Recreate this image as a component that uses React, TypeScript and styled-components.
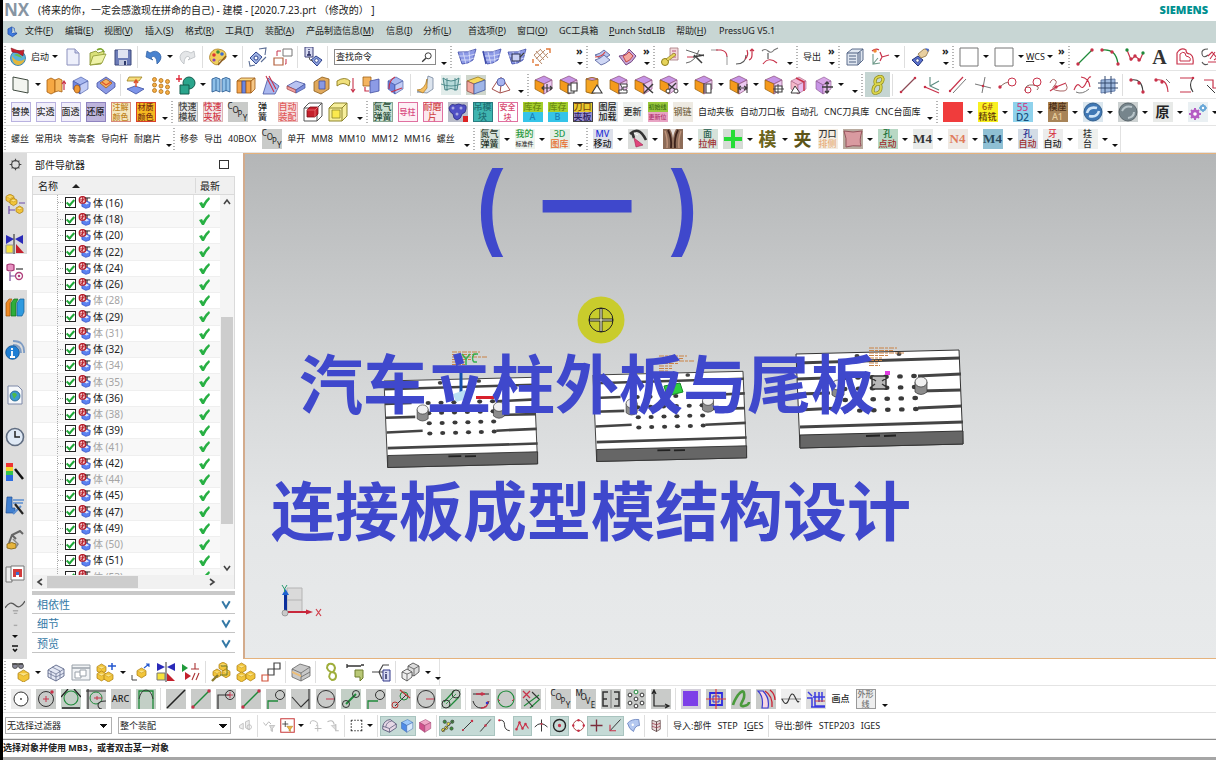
import React from 'react';
import styled, { createGlobalStyle, css } from 'styled-components';

const Global = createGlobalStyle`
  *, *::before, *::after { box-sizing: border-box; }
  body { margin: 0; background: #fff; }
  body, button, input, select {
    font-family: "Noto Sans", "Noto Sans CJK SC", sans-serif;
    font-size: 9px;
    color: #222;
  }
  button { border: 0; padding: 0; margin: 0; background: none; }
`;

/* ---------- icon drawings: [path, fill, stroke, stroke width] ---------- */

type Shape = [string, string?, string?, number?];
const N = 'none';
const K = '#3c3c3c';
const R = '#c8324a';
const G = '#1f8a3a';
const c = (x: number, y: number, r: number) =>
  `M${x - r} ${y}a${r} ${r} 0 1 0 ${2 * r} 0a${r} ${r} 0 1 0 ${-2 * r} 0z`;
const box = (x: number, y: number, w: number, h: number) => `M${x} ${y}h${w}v${h}h${-w}z`;
const ln = (d: string, s = K, w = 1.2): Shape => [d, N, s, w];
const dot = (x: number, y: number, f = R, r = 1.7): Shape => [c(x, y, r), f, N];

const cube = (top: string, left: string, right: string, edge = '#555'): Shape[] => [
  ['M2 6l8-4 7 4-8 4z', top, edge, 0.6],
  ['M2 6l7 4v9l-7-5z', left, edge, 0.6],
  ['M9 10l8-4v8l-8 5z', right, edge, 0.6],
];
const sync: Shape[] = [
  ['M1 5l9-4 8 4-8 4z', '#c795e6', '#8a4a75', 0.7],
  ['M1 5l9 4v10l-9-5z', '#f59a1c', '#94600f', 0.7],
  ['M10 9l8-4v9l-8 5z', '#ecc9f2', '#8a4a75', 0.7],
];
const blue = cube('#a8b8f0', '#6f86e0', '#c3cdf6', '#3b4fa0');
const gold = (x: number, y: number, s: number): Shape[] => [
  [`M${x} ${y + s * 0.3}l${s * 0.5} ${-s * 0.3}l${s * 0.5} ${s * 0.3}v${s * 0.5}l${-s * 0.5} ${s * 0.3}l${-s * 0.5} ${-s * 0.3}z`, '#f2c53a', '#a87a10', 0.7],
  [`M${x} ${y + s * 0.3}l${s * 0.5} ${s * 0.25}l${s * 0.5} ${-s * 0.25}`, '#fbe58c', '#c79a24', 0.6],
];
const tile = (f = '#c9cbc9'): Shape => [box(0, 0, 20, 20), f, N];
const sheet: Shape[] = [
  ['M1 5q10 1 18-3l-3 11q-5 4-11 4z', '#8d9ae6', '#3d4aa8', 0.8],
  ln('M6 5l3 12M12 4l1 12M2 9q9 1 16-2M4 13q8 1 13-2', '#dfe4fb', 0.8),
];
const gridBox: Shape[] = [
  ['M2 8l8-5 8 4v7l-8 5-8-4z', '#e4e8f4', '#5c6688', 0.9],
  ln('M2 8l8 4 8-5M10 12v7M5 9v7M14 9v7M2 11l8 4 8-4M6 5l8 4', '#5c6688', 0.7),
];

const ICONS: Record<string, Shape[]> = {
  app: [['M3 6l6-3v9l8 1-7 5-7-4z', '#3f7be0', '#123f9c', 1], ['M9 3l4 2v5l4 3', '#8db8f5', '#123f9c', 0.8], ['M9 12l4-2', N, '#fff', 1]],
  start: [[c(10, 11, 7.5), '#5ab3dc', '#2f6f96', 0.8], ['M4 9q5 8 13 3q-2 6-8 6q-5-2-5-9z', '#e3b73c', N], ['M6 8q5-3 8 3', '#6cc04c', N], ['M3 1l8 3 5-1-1 6-5-3-6-1z', '#c4202c', '#7c0f18', 0.5]],
  file: [['M4 2h8l4 4v12h-12z', '#eef0fb', '#8b90bd', 1], ['M12 2v4h4', '#c9cdea', '#8b90bd', 1]],
  open: [['M2 6l6-2 2 2 6-2v4l-3 9-11 1z', '#d9e07a', '#7f8a2a', 0.8], ['M5 9l13-2-4 9-12 2z', '#eef2a8', '#8c972f', 0.8], ['M9 3q5-3 7 2', N, '#7ca62e', 1.6]],
  save: [[box(2, 3, 16, 15), '#6c7cb8', '#3d497b', 1], [box(5, 3, 10, 8), '#dfe3f2', N], [box(6, 13, 8, 5), '#c3c9df', N], [box(11, 14, 2, 4), '#2d396b', N]],
  undo: [['M3 10l1-6 3 2q6-4 10 1 3 5-3 10 0-5-2-7-2-2-4 1l2 2z', '#4a83cf', '#2c5b9e', 0.7]],
  redo: [['M17 10l-1-6-3 2q-6-4-10 1-3 5 3 10 0-5 2-7 2-2 4 1l-2 2z', '#e4e6e8', '#b3b7bb', 0.7]],
  palette: [['M10 2q9 1 8 8-1 4-6 3-2 0-1 3-1 3-5 1-6-4-4-9 2-6 8-6z', '#f0cf5c', '#a87c1d', 0.8], dot(6, 8, '#d33', 1.8), dot(10, 5, '#3a8f3a', 1.8), dot(14, 7, '#3b6bd0', 1.8), dot(6, 13, '#8b3bb5', 1.6), ln('M10 18l8-9', '#8a5a20', 1.4)],
  rotate: [['M2 11l6-6 6 5-6 7z', '#9fb3e4', '#32478f', 1], [c(8, 11, 2), '#fff', '#32478f', 1], ln('M11 2l7-1-1 7M13 15l5-5M1 14l1 5 5-1', '#5a6c94', 1.1)],
  windows: [[box(10, 2, 9, 7), '#fff', '#777', 1], [box(1, 11, 9, 7), '#fff', '#b4623f', 1.2], ln('M4 9v-5h4M13 12v5h-1', R, 1)],
  info: [[box(2, 0, 8, 10), '#d6d9f0', '#3b3f78', 1], ln('M6 4v4M6 2v1M4 8h4', '#20245c', 1.3), ['M8 13l5-4 6 4-5 6z', '#8ea2dd', '#2b3f8b', 1], [c(13.5, 13.5, 1.8), '#fff', '#2b3f8b', 0.8], ln('M6 10q0 4 4 4', '#555', 1)],
  sheet,
  sheet2: [...sheet, ln('M1 4l3 13', '#3d4aa8', 1.4)],
  sheet3: [...sheet, [box(5, 7, 8, 7), '#c9d0f5', '#2b2f50', 1.1], ln('M13 10l4-4', K, 1.2)],
  xform: [ln('M2 8l7-6M4 12l9-9M7 15l9-9M4 4l8 9M2 8l8 9M8 2l8 9', '#b88b6c', 1), ln('M14 2h4v4M3 18h4M1 12v4', '#e07838', 1.4)],
  surf1: [['M2 8q5-1 9-5l6 5q-5 4-9 4z', '#b9c5ee', '#4a5796', 0.8], ['M2 13q5-1 9-5l6 5q-5 4-9 5z', '#cfd7f5', '#4a5796', 0.8], ln('M2 10q7 0 10-5', '#d64545', 1.2)],
  surf2: [['M1 9q7 0 10-7l7 7q-4 7-10 9z', '#c8a8d8', '#6a3c7c', 0.9], ['M5 9q4-1 6-4l4 4q-3 5-7 6z', '#f3a9a0', '#c13b3b', 0.9]],
  key: [[box(10, 1, 8, 12), '#f4d9dc', '#a3777c', 0.8], ln('M12 4h4M12 7h4M12 10h4', '#a36', 0.8), [c(5, 15, 3.5), '#e6d35a', '#8d7d1c', 1], ['M6 12l8-6 2 2-8 6z', '#e6d35a', '#8d7d1c', 0.7]],
  trim: [ln('M1 3l18 6M1 16q9-1 13-13', '#666', 1), ln('M9 8l8 8M8 10l11-2', K, 1.5), ln('M2 10h6', R, 1)],
  corner: [ln('M1 3h7', '#999', 1), ln('M6 3h5q6 1 6 7', R, 1.2), ln('M17 9v9', '#999', 1)],
  curves: [ln('M1 17q10 0 10-9', '#555', 1.1), ln('M12 3q2 6-2 9M17 2v6q0 4-3 5M15 4l2-2 2 2', R, 1.2)],
  bridge: [ln('M2 4q3-3 6 0t6-1l4-2', '#777', 1.1), ln('M3 17q6-8 14-1', R, 1.2), ln('M8 6v6', K, 1)],
  layers: [['M2 6l5-4h11v11l-5 5h-11z', '#dfe6f0', '#4d5f80', 0.9], ln('M2 6h11v12M13 6l5-4M4 9h7M4 12h7M4 15h7M15 5v11', '#4d5f80', 1)],
  csys: [ln('M3 7v10l7-1M3 17l5-6', '#6f9a8a', 1.1), ln('M2 4q4-3 7-1M12 10l7-2M12 10l-2-5M12 10l-2 4', R, 1.2), dot(5, 4, '#f08a35', 1.8)],
  hand: [['M2 13l6-4 5 4-5 6z', '#5c73cf', '#223379', 1], [c(7.5, 13.5, 1.7), '#fff', '#223379', 0.7], ['M8 7l6-5 5 1-3 6-5 2z', '#e8cfa0', '#8b6e3f', 0.8], ['M15 1l4 1-1 3z', '#4868c8', N]],
  white: [[box(1, 1, 18, 18), '#fff', '#777', 1]],
  line: [ln('M3 17l14-14', G, 1.3), dot(3, 17), dot(17, 3)],
  arc: [ln('M2 3q14-2 16 14', G, 1.3), dot(2, 3), dot(12, 5), dot(18, 17)],
  spline: [ln('M2 3l4 10 4-4 5 4 3-7', R, 1.2), dot(6, 12), dot(10, 9), dot(14, 13), dot(2, 3, G), dot(18, 6, G)],
  offset: [ln('M2 17v-11q4-6 9-3 0 4 4 4 4 2 3 10z', R, 1.2), ln('M5 14v-7q3-3 5-1 0 4 4 4 2 1 1 4z', R, 1)],
  proj: [ln('M8 2q-7 0-6 5t6 1M2 15q2 4 6 2', '#555', 1.1), ln('M8 9l4-4 5 6-3 2M8 15h9M10 12l5-7', R, 1.1)],
  plane: [['M2 2l15 3v13l-15-3z', '#f3f5f0', '#3f4a3f', 1]],
  extrude: [['M1 5l4-2 4 2v12l-4 2-4-2z', '#f6a843', '#a75e0e', 0.8], ['M9 5q4-3 7 0v12q-4-2-7 0z', '#f6b85e', '#a75e0e', 0.8], ln('M18 15V7M16 9l2-3 2 3', R, 1.2)],
  hole: [...blue, ['M6 10a3 4 0 1 0 .1 0z', '#f19a35', '#9c5611', 0.8]],
  pocket: [['M1 8l9-6 9 6v4l-9 7-9-7z', '#8c9be6', '#414e9e', 0.8], ['M4 8l6-4 6 4-6 5z', '#f6b460', '#a55f14', 0.8], ln('M6 7l4 3 5-3', '#e0532a', 1.2)],
  thick: [['M3 2h13l-3 4h-12z', '#f5dc7c', '#9c8020', 0.8], ['M1 14l8-3 9 3-8 5z', '#7e95ea', '#3b4fa0', 0.8], ln('M10 12v-7M8 8l2-3 2 3', '#e0532a', 1.4)],
  pattern: [0, 1, 2].flatMap((a) => [0, 1, 2].map((b): Shape => [c(3.5 + a * 6.5, 4.5 + b * 5.5 + a, 2), '#f4ad45', '#b06f14', 0.8])),
  unite: [[c(13, 8, 6), '#2aa58c', '#125c4c', 1], [box(4, 10, 9, 9), '#2aa58c', '#125c4c', 1], ln('M3 0v7M0 4h6', '#d23', 1.3)],
  trimBody: [['M1 4q4-3 8 0v13q-4-3-8 0z', '#8fc0e8', '#2c5f96', 0.9], ['M11 4q4-3 8 0v13q-4-3-8 0z', '#8fc0e8', '#2c5f96', 0.9], ln('M5 4v12M15 4v12', '#2c5f96', 0.8)],
  split: [['M1 6l4-3h14l-4 3z', '#f7d887', '#9e5b14', 0.8], ['M1 6h5v12h-5z', '#f3a44c', '#9e5b14', 0.8], [box(6, 6, 4, 12), '#6c86e0', '#3b4fa0', 0.8], [box(10, 6, 5, 12), '#f3a44c', '#9e5b14', 0.8], ['M15 6l4-3v11l-4 4z', '#f7c887', '#9e5b14', 0.8]],
  draft: [['M7 3l11 8-4 8h-12z', '#aab8ef', '#4453a0', 0.8], ln('M5 1l8 16M8 1l7 13', R, 1.1)],
  chamfer: [['M1 11l9-5 9 3-9 6z', '#b8c3f1', '#4453a0', 0.8], ['M1 11l9 4v3l-9-4z', '#f0a0a0', '#a04040', 0.7], ['M10 15l9-6v4l-9 5z', '#7e8fdd', '#4453a0', 0.7]],
  shell: [['M3 7l8-5 7 2v10l-8 5-7-3z', '#e0a95c', '#8c5a17', 0.8], [box(8, 6, 6, 8), '#8899e4', '#414e9e', 0.8]],
  sweep: [['M1 6q8-5 13 0l-1 5q-6-5-12 0z', '#f0e07c', '#8d7c20', 0.9], ln('M17 3v14M15 14l2 3 2-3', R, 1.1)],
  scale: [['M2 2h8v9h-8z', '#f4b45f', '#a05f14', 0.8], ['M9 6l9-2v12l-9 2z', '#8c9be6', '#414e9e', 0.8], ln('M4 12v4h4', R, 1.2)],
  wrap: [...blue, ln('M3 14q0-9 6-12M5 17l11-4', R, 1.1)],
  bend: [['M12 1l5 2v11l-6 4-10-1 9-4z', '#dce4ee', '#74849c', 0.8], ['M1 15q8 0 10-11v9l-4 5z', '#f6bf62', '#a87520', 0.7]],
  face: [tile('#e1ecea'), ['M2 3q8 6 16 0l-2 12q-6-3-12 0z', '#b6dada', '#3f7f80', 0.9], ln('M0 9q10 4 20 0M6 3v13M14 3v13', '#3f7f80', 0.8)],
  block: [tile('#cfd6cc'), ['M1 6l11-4 7 3-11 4z', '#f8d95c', '#9c7a1a', 0.8], ['M1 6l7 3v10l-7-3z', '#f3a9a0', '#96524c', 0.8], ['M8 9l11-4v10l-11 4z', '#9fb6e8', '#4459a0', 0.8]],
  cone: [ln('M7 5l-6 9 8 4 10-3-6-9M9 18l1-8M10 2v6', '#a5504c', 1), [c(10, 7, 4), '#a7b4f0', '#4453a0', 0.8]],
  s1: [...sync, ln('M8 13h10M13 9v8M10 11l-2 2 2 2M16 11l2 2-2 2', K, 1.2)],
  s2: [...sync, [box(9, 10, 6, 8), '#fff', K, 1.1], [box(12, 8, 6, 8), '#fff', K, 1.1]],
  s3: [['M2 4q6-3 12 0v13q-6 3-12 0z', '#f5a623', '#94600f', 0.8], ['M2 4q6 3 12 0-6-3-12 0z', '#c795e6', '#94600f', 0.7], ['M13 10l5 8h-10z', '#fff', K, 1.1]],
  s4: [...sync, ['M11 9h7v3h-4v3h4v3h-8v-3h3v-3z', '#fff', K, 1]],
  s5: [...sync, ln('M9 9l10 9M19 9l-9 9', K, 1.5)],
  s6: [...sync, ln('M9 9l9 7M17 8l-8 8', K, 1.4), [c(9, 16, 2), '#fff', K, 1], [c(17, 16, 2), '#fff', K, 1]],
  s7: [...sync, [box(12, 9, 5, 9), '#fff', K, 1.1], ln('M10 8v10', K, 1)],
  s8: [...sync, ln('M9 9v9M18 9v9M9 13h9M12 11l-3 2 3 2M15 11l3 2-3 2', K, 1.1)],
  s9: [...sync, [box(11, 11, 7, 6), '#fff', K, 1.1], ln('M9 14h11M14 9v10', K, 0.9)],
  s10: [...cube('#f0b6d4', '#f5b9c9', '#e6bdf0', '#a86080'), ln('M7 3l8 4v9', R, 1.5), ['M6 11l5 7h-9z', '#fff', K, 1]],
  s11: [...cube('#d9a6e8', '#c795e6', '#e6bdf0', '#86508c'), ln('M8 12h11M13 7v11M11 9l2-2 2 2M11 16l2 2 2-2', K, 1.3)],
  link: [['M10 2q4-2 5 2 0 4-4 5t-4-2q0-4 3-5zM9 9q4-1 4 3 0 5-4 6t-4-2q0-5 4-7z', N, '#8f8c1c', 3.2], ['M10 2q4-2 5 2 0 4-4 5t-4-2q0-4 3-5zM9 9q4-1 4 3 0 5-4 6t-4-2q0-5 4-7z', N, '#dcd64c', 1.8]],
  c1: [ln('M3 17l14-14', '#8c4a55', 1.2), dot(3, 17, R, 1.3), dot(17, 3, R, 1.3)],
  c2: [ln('M7 2v9l9 4M7 11l9-5', '#5c8c80', 1.1), ln('M2 12l14 6', R, 1.3), dot(2, 12, R, 1.3)],
  c3: [ln('M2 16l13-14', R, 1.2), ln('M5 18l13-14', '#777', 1), dot(2, 16, R, 1.2)],
  c4: [ln('M2 9l16 4M12 2l-3 16', '#777', 1), dot(10, 11, R, 1.3)],
  c5: [ln('M2 12q6-6 9-4', '#8a6a60', 1), ln(c(14, 7, 4), R, 1), dot(2, 12)],
  c6: [ln('M2 16q0-7 8-6t4 5', '#8a6a60', 1), ln(c(14, 7, 4), R, 1), ln(c(5, 15, 3), R, 1)],
  c7: [ln('M2 16l6-4 10-4', R, 1.1), ln('M2 8q2-5 5-3t-1 6 6 5 6-7', '#a66', 1), dot(8, 12)],
  c8: [ln('M1 15q3-8 6-4t6-3 5-6M8 2q8 1 9 10', R, 1.1), ln('M3 17q6 3 13-3', '#777', 1)],
  c9: [['M3 5l14-1v12l-14 2z', '#9fb9de', '#506a9a', 0.8], ln('M7 1v18M13 1v18M0 8h20M0 13h20', '#33486c', 1)],
  c10: [ln('M3 5q11-2 12 12', K, 1.1), dot(3, 5), dot(15, 17), dot(11, 8)],
  c11: [ln('M3 5q11-2 12 12', R, 1.1), dot(3, 5), dot(9, 7), ln('M13 4l4 4', '#777', 1)],
  c12: [ln('M2 3h13M2 17h11', R, 1.2), ln('M15 3q-5 7 0 14', K, 1.1), dot(15, 3, R, 1.3)],
  c13: [ln('M1 5h9v8h9', R, 1.2), ln('M4 10l8 8', K, 1)],
  cubeRed: [['M1 6l5-5h13v13l-5 5h-13z', N, '#555', 1], ln('M1 6h13v13M14 6l5-5', '#555', 1), ['M4 8l3-3h8v7l-3 3h-8z', '#c4202c', '#7c0f18', 0.8], ln('M4 8h8v7M12 8l3-3', '#f08080', 0.7)],
  cubeYel: [['M1 6l5-5h13v13l-5 5h-13z', '#f7ef9c', '#8d852c', 1], ln('M1 6h13v13M14 6l5-5', '#8d852c', 1), [box(4, 8, 8, 8), '#fbe94e', '#8d852c', 0.8]],
  trefoil: [tile('#b9bcc8'), ['M1 6q2-5 6-3 4-2 7 0 5-1 4 4 0 4-4 5-1 5-5 6-4-1-4-6-4-2-4-6z', '#4f4fc4', '#2c2c85', 0.8], dot(5, 6, '#a8a8e0', 1.5), dot(13, 6, '#a8a8e0', 1.5), dot(9, 12, '#a8a8e0', 1.5), [box(15, 14, 5, 6), '#d22', N]],
  redSq: [[box(0, 0, 20, 20), '#f03c3c', N]],
  swirl: [tile('#dbe7ef'), [c(10, 10, 9), '#3f77b4', '#24507f', 0.8], ln('M4 11q2-7 10-5M16 9q-2 7-10 5', '#cfe4f7', 2.6)],
  swirlG: [tile('#cdd2d2'), [c(10, 10, 9), '#76858c', '#4c585e', 0.8], ln('M4 9q3-6 10-4M10 16q6-1 6-6', '#b9c5ca', 2)],
  gears: [tile('#eaf0f3'), [c(7, 12, 4.5), '#b55cc4', N], ln('M7 6v12M1 12h12M3 8l8 8M11 8l-8 8', '#b55cc4', 2), [c(7, 12, 1.8), '#fff', N], [c(15, 6, 3.3), '#6aa8d8', N], ln('M15 2v8M11 6h8', '#6aa8d8', 1.6), dot(15, 6, '#fff', 1.2)],
  hook: [tile('#dadcda'), ln('M2 5q4-4 8-3t8 9M4 3l2 6', '#333', 2.6), ln('M6 4l4 2', '#fff', 1), ['M6 9l2 9 7-2z', '#e0457c', '#a0204c', 0.6]],
  legs: [tile('#8d6c58'), ['M7 0q3 5 3 12 0-7 3-12z', '#e8e0dc', N], ['M5 1q4 8 3 18M15 1q-4 8-3 18', N, '#3c211b', 1.8], ['M2 2q3 8 2 17M18 2q-3 8-2 17', N, '#c0947c', 1.4]],
  plus: [tile('#d5dcd5'), ['M8 1h4v7h7v4h-7v7h-4v-7h-7v-4h7z', '#25dd35', N]],
  pink: [tile('#b9ab9f'), ['M1 2q9 2 18 0-3 9-1 15-9-1-15 1 1-9-2-16z', '#d99aa0', '#96525c', 1]],
  b1: [...gold(7, 8, 11), [c(4, 4, 2.5), '#889', '#444', 0.8], [c(10, 4, 2.5), '#889', '#444', 0.8], ln('M1 2h11', '#444', 1.5)],
  b2: gridBox,
  b3: [[box(1, 3, 18, 15), '#f2f4f6', '#9aa2aa', 1], ln('M1 6h18', '#9aa2aa', 1.5), [box(4, 10, 6, 6), '#fff', '#9aa2aa', 1], [box(9, 8, 6, 6), '#fff', '#9aa2aa', 1]],
  b4: [...gold(1, 2, 9), ...gold(1, 9, 9), ...gold(8, 10, 9), ln('M16 1v7M12 4h8', '#2458d0', 1.5)],
  b5: [...gold(6, 6, 9), ln('M1 13v5h5', '#444', 1), ln('M13 6l5-4M15 2h3v3', '#2458d0', 1.1)],
  b6: [['M1 1l8 4-8 4zM19 1l-8 4 8 4z', '#2a2ab8', N], ln('M10 0v20', '#333', 1), [box(1, 11, 8, 7), '#f6e23c', '#777', 1], ['M11 11l8 8h-8z', '#c4202c', N]],
  b7: [['M1 2l6 4-6 4z', '#1f9a3a', N], ['M4 10l6 4-6 4z', '#c4202c', N], ln('M10 7h8M14 1v6M11 18l3-7M15 18l3-7', '#a33', 1.1)],
  b8: [...gold(8, 0, 8), ...gold(2, 7, 8), ...gold(11, 7, 8), ln('M1 19l6-6', '#8a7a2c', 2.4), ln('M10 4h6v9h-7', '#6d7c2c', 1)],
  b9: [...gold(1, 1, 9), ...gold(1, 10, 9), ...gold(10, 9, 9)],
  b10: [[box(13, 1, 6, 6), '#fff', '#444', 1.2], [box(7, 7, 6, 6), '#fff', '#444', 1.2], [box(1, 13, 6, 6), '#fff', '#d2543c', 1.2]],
  b11: [['M1 7l8-5 10 3v9l-9 5-9-4z', '#c9c9c9', '#666', 0.8], ln('M1 7l9 4 9-6M10 11v8M10 15l9-5', '#666', 0.8), ['M1 9l9 4v2l-9-4z', '#edbd76', N]],
  b12: [['M8 2q5-1 6 4-1 5-4 4t-4-4q0-3 2-4zM10 10q5 0 5 4t-4 4q-5-2-1-8z', N, '#9fae3c', 2]],
  b13: [ln('M1 4h14M1 2v4M15 3h3', '#333', 1.3), ['M9 8h8v8l-3 3v-4h-5z', '#b9c877', '#6d7c2c', 1]],
  b14: [ln('M1 10h7M8 10l4-7h6M8 10h10M8 10l3 7', '#444', 1.2), [box(12, 8, 7, 11), '#d6d9f0', '#33388a', 1], ln('M15 12v5M15 10v1', '#20245c', 1.4)],
  b15: [['M7 4l5-3 6 3v6l-5 4-6-3z', '#dcdcdc', '#555', 0.9], ['M1 10l5-3 5 3v5l-5 4-5-3z', '#eee', '#555', 0.9], ln('M1 10l5 2 5-2M6 12v7M7 4l6 3 5-3M13 7v7', '#555', 0.8)],
  d1: [tile('#ebebeb'), [c(10, 10, 7), '#fff', '#333', 1], dot(10, 10, '#333', 0.9)],
  d2: [tile(), ln(c(10, 10, 7.5), '#333', 1), ln('M7 10h6M10 7v6', R, 1), dot(16, 3)],
  d3: [tile('#c3cfc6'), ln(c(10, 9, 7), G, 1.1), ln('M0 8l7-8M20 8l-7-8M1 19h18', '#222', 1.3)],
  d4: [tile(), ln('M2 0v20M0 2h20', '#333', 1.2), ln(c(10, 9, 6), G, 1), ln('M8 9h8M11 7v4', R, 1), ln('M20 12q-8 0-8 4t4 4', '#333', 1.1)],
  d6: [tile('#c3cfc6'), ln('M3 20v-18h14v18', G, 1.3), ln('M3 10q2-9 7-9t7 9', '#333', 0.9)],
  d7: [tile(), ln('M1 19L19 1', '#222', 1.6)],
  d8: [tile(), ln('M2 18L18 2', G, 1.5), dot(2, 18), dot(18, 2)],
  d9: [tile(), ln('M2 20v-14h12', '#333', 1.2), ln(c(14, 6, 4.5), '#333', 1), ln('M11 6h6M14 3v6', R, 0.9)],
  d10: [tile(), ln('M2 20v-8h10', G, 1.3), ln(c(14, 6, 4.5), '#333', 1)],
  d11: [tile(), ln('M1 8l9 10 8-8M18 0v20', '#333', 1.1)],
  d12: [tile(), ln(c(10, 10, 8.5), '#333', 1), ln('M10 10h8', R, 1)],
  d13: [tile('#c3cfc6'), ln('M5 15l10-10', G, 2), ln(c(5, 15, 3.5), '#333', 1), ln(c(15, 5, 3.5), '#333', 1)],
  d14: [tile(), ln('M4 17l11-11', '#333', 1), ln(c(4, 16, 3), '#b33', 1), ln(c(13, 7, 4), G, 1), ln('M9 1l10 8', '#b33', 1.3)],
  d15: [tile('#c3cfc6'), ln('M3 13L13 2M8 18L18 8', G, 1.3), ln(c(5, 15, 4), '#333', 1), ln(c(15, 5, 4), '#333', 1), ln('M5 15l10-10', G, 0.8)],
  d16: [tile(), ln('M2 5h16M2 12q2 7 8 7t8-7', '#333', 1), ln('M5 5h9M10 19q7 0 7-7', R, 1.3), dot(16, 14, '#33c', 1.3), dot(11, 5)],
  d17: [tile(), ln(c(10, 10, 8), G, 1.1), ln('M2 10l2 2M18 10l-2 2', R, 1)],
  d18: [tile(), ln('M2 2l7 7M9 2l-7 7', R, 1.3), ln('M3 17L18 6M9 19l10-9', G, 1.1), ln('M11 3l7 7M5 10l7 8', '#333', 1.1)],
  d19: [tile(), ln('M7 3h-5v14h5M2 10h4M13 3h5v14h-5M14 10h4', '#333', 1.5), ln('M10 1v18', '#666', 0.8)],
  d20: [tile(), ...[[4, 6], [10, 3], [16, 6], [4, 14], [10, 17], [16, 14], [10, 10]].map(([x, y]): Shape => [c(x, y, 1.9), '#fff', y === 3 ? G : '#333', 1])],
  d21: [tile(), ln('M3 2v15h14M1 5l2-4 2 4M14 15l4 2-4 2', '#222', 1.2)],
  d22: [tile('#d3cfdb'), [box(2, 2, 15, 15), '#7d3fe8', N]],
  d23: [tile(), [box(4, 4, 12, 12), N, '#2b2be0', 1.8], [box(7, 7, 6, 6), N, '#2b2be0', 1], ln('M10 0v20M0 10h20', '#e03c3c', 1.2)],
  d24: [tile(), ln('M2 16q1-4 5-10 5-6 6-2t-2 9 2 4 5-4', '#4a9a3c', 2.6)],
  d25: [tile(), ['M2 2q6 6 4 17h6q2-10-5-17z', '#f5d6e4', '#3b3bd0', 1.2], ln('M9 2q8 5 7 16M14 1q5 4 5 10', '#c23', 1.3)],
  d26: [tile('#eee'), ln('M0 10h20', '#888', 1), ln('M1 10q4 9 7 0t6-2 4 4', '#333', 1.1)],
  d27: [tile('#ddd'), ln('M2 3l4 4M1 9h5v9M9 3v14h10M7 8h12M13 3v10M16 3v10M5 18h14', '#3b3be0', 1.5), ln('M9 12h10', '#c44', 1)],
  e0: [['M2 10l5-3v8l-5-2zM10 5l5-2v13l-5-3z', '#eee', '#b5b5b5', 1], ln(c(15, 12, 3), '#b5b5b5', 1)],
  e1: [ln('M2 6l3 4 4-5 3 3', '#bbb', 1.3), ['M10 10h7l-3 4v4l-2-1v-3z', '#ddd', '#aaa', 0.8]],
  e2: [[box(1, 1, 18, 18), '#fff', '#c93a3a', 1.4], ln('M7 4v8M3 8h8', '#333', 1.1), ['M9 11h8l-3 4v3l-2-1v-2z', '#f0b840', '#94690f', 0.6]],
  e3: [ln('M3 8q0-6 6-4t2 7M13 9v9M9 14h9', '#bbb', 1.3)],
  e4: [ln('M2 5q8-4 9 4M13 8v9h4', '#bbb', 1.5), ['M7 10h6v6z', '#ddd', '#bbb', 0.8]],
  e5: [ln('M3 3h2m2 0h2m2 0h2m2 0h2v2m0 2v2m0 2v2m0 2v2h-2m-2 0h-2m-2 0h-2m-2 0h-2v-2m0-2v-2m0-2v-2m0-2v-2', '#333', 1.5)],
  e6: [['M1 11q2-8 10-9l8 6v5l-9 6-9-4z', '#e6d8e6', '#5a5a7a', 1.2], ln('M1 11l9 3 9-6M10 14v5M5 12q1-7 8-8', '#5a5a7a', 1)],
  e7: cube('#9cc8fb', '#4f8be8', '#d8eafd', '#2d5ba8'),
  e8: cube('#f0a8c8', '#d0508c', '#e88cb8', '#8c2c5c'),
  e9: [...[[5, 5], [10, 8], [15, 5], [7, 13], [14, 14], [3, 16]].map(([x, y], i): Shape => [c(x, y, 2.2), i % 2 ? '#f0df3c' : '#3a8f3a', '#444', 0.9]), ln('M2 18L17 3', '#444', 1)],
  e10: [ln('M3 17L17 3', '#333', 1.3), dot(16, 4), dot(4, 16, R, 1.4)],
  e11: [ln('M3 18L17 2', '#333', 1.3), dot(10, 10)],
  e12: [ln('M3 3q7-1 7 6t7 8', '#333', 1.3), dot(3, 3, R, 1.5)],
  e13: [ln('M2 15l4-9 4 8 4-6 4 6', R, 1.5), dot(6, 6), dot(10, 14), dot(14, 8), dot(2, 15)],
  e14: [ln('M1 12q8-9 17 0M10 2v16', '#333', 1.3), dot(10, 8, R, 1.4)],
  e15: [ln(c(10, 10, 8), '#222', 1.8), dot(10, 10, R, 2.2)],
  e16: [ln(c(10, 10, 7), '#a44', 1.3), dot(10, 3), dot(10, 17), dot(3, 10), dot(17, 10)],
  e17: [ln('M10 2v16M2 10h16', '#7c2c3c', 1.8)],
  e18: [ln('M4 17L18 2', '#333', 1.3), ln('M4 9v8h8', R, 1.5)],
  e19: [['M2 7q5-6 15-5l1 8q-6 0-8 8-6-3-8-11z', '#b4c8f0', '#5c78b8', 1], dot(9, 9, '#fff', 1.6)],
  e20: [['M4 3l6 2v13l-6-3zM10 5l5-2v12l-5 3z', '#e8dada', '#5c4444', 1], ln('M4 7l6 2 5-2M4 11l6 2 5-2', '#9c3c4c', 1)],
  gear: [[c(10, 10, 6), N, '#444', 1.8], ln('M10 1v4M10 15v4M1 10h4M15 10h4M4 4l2 2M14 14l2 2M16 4l-2 2M6 14l-2 2', '#444', 1.8)],
  n1: [...gold(1, 0, 8), ...gold(5, 4, 7), ...gold(11, 12, 7), ln('M4 12v8M4 16h6M14 9h6', '#6b4aa8', 1.2)],
  n2: [['M1 1l8 4-8 5zM18 1l-8 4 8 5z', '#2a2ab8', N], ln('M9 0v20', '#222', 1), [box(1, 11, 7, 8), '#f6e23c', '#999', 1], ['M11 10l8 9h-8z', '#c4202c', N]],
  n3: [['M2 3q3-2 7 0v5q-4 2-7 0z', '#e690c0', '#a0306c', 1.2], ln('M11 7h7', '#444', 1.3), ln('M5 10v9M5 14h5', '#7a4a98', 1.2), [c(14, 14, 3.5), N, '#b0407c', 1.3], dot(14, 14, '#b0407c', 1.3)],
  n4: [['M1 6l3-4h3l-2 4v13h-4z', '#f08a24', '#9c5208', 0.7], ['M6 6l3-4h4l-2 4v13h-5z', '#2fae3a', '#126b1b', 0.7], ['M12 6l3-4h4v13l-2 4h-5z', '#2f9adf', '#125c94', 0.7]],
  n5: [ln('M8 1q12 0 11 12M8 5q8 0 8 8', '#7d9cc4', 1.8), [c(7.5, 12.5, 6.8), '#1f7fd4', '#0f4f8c', 0.8], ln('M7 11v6M7 8v2M5 17h5', '#fff', 1.8)],
  n6: [['M3 1h10l4 4v14h-14z', '#f6f8fb', '#7c88a8', 1], [c(10, 11, 5), '#3b9ad0', '#1a5c84', 0.8], ['M7 9q3-3 5 1l-3 4z', '#4cb84c', N]],
  n7: [[c(10, 10, 8.5), '#dfe9f5', '#5f6c80', 1.6], ln('M10 4v6h5', '#222', 1.5)],
  n8: [[box(1, 1, 7, 4), '#e33', N], [box(1, 5, 7, 4), '#f3d62c', N], [box(1, 9, 7, 4), '#36c44c', N], [box(1, 13, 7, 6), '#2b6be0', N], ln('M10 7l8 10', '#111', 2.5)],
  n9: [['M2 1h5v11h3v5h-9z', '#3f7fd0', '#1f4f94', 0.7], ln('M8 4h11M8 7h10', '#5c8fd0', 1.5), ln('M8 18l8-8', '#5c8fd0', 2), ln('M10 8l8 10', '#222', 2.2)],
  n10: [ln('M4 13l3-8 8-4 3 3M7 5l4 4', '#666', 2), ['M2 14q5-3 9 0v4q-5 2-9 0z', '#e6b43c', '#7c5c10', 0.8], ln('M8 9l5 5-2 3', '#888', 1.5)],
  n11: [[box(1, 3, 6, 15), '#eee', '#777', 1], [box(6, 2, 13, 14), '#fff', '#777', 1], ['M8 5h9v8h-3v-5h-3v5h-3z', '#d23c3c', N], [box(11, 8, 3, 3), '#3b6bd0', N]],
  n12: [ln('M0 12q5-8 10-3t10-4', '#555', 1.3)],
  body: [['M6 10l5-3 8 3-1 7-6 2-6-3z', '#5c82f0', '#1e3fc0', 1], ['M9 11l4-2 4 2-4 2z', '#dce6ff', N], [c(7, 6, 5), '#f6d6d6', '#b8202c', 2.2], ln('M4 10l7-8M7 1v9M3 6h9', '#b8202c', 1.4), ln('M11 3h8M14 3v5', '#222', 1.5)],
  search: [ln(c(12, 8, 5), '#333', 1.6), ln('M8 12l-6 6', '#333', 2.2)],
};

const Svg = styled.svg`display: block; flex: none;`;
const Icon = ({ name, size = 20 }: { name: string; size?: number }) => (
  <Svg width={size} height={size} viewBox="0 0 20 20" aria-hidden="true">
    {ICONS[name].map(([d, f = N, s = N, w = 1], i) => (
      <path key={i} d={d} fill={f} stroke={s} strokeWidth={w} />
    ))}
  </Svg>
);

/* ---------- toolbar parts ---------- */

const Row = styled.div<{ $h: number }>`
  display: flex;
  flex: none;
  align-items: center;
  height: ${(p) => p.$h}px;
  overflow: hidden;
  border-bottom: 1px solid #e4e4e4;
`;
const Bar = styled.div<{ $w?: number; $end?: boolean }>`
  display: flex;
  align-items: center;
  height: 26px;
  flex: ${(p) => (p.$w ? `0 0 ${p.$w}px` : '1 0 auto')};
  ${(p) => p.$w && css`min-width: 0;`}
  ${(p) => p.$end && css`border-right: 1px solid #e2e2e2;`}
`;
const Grip = styled.span`
  flex: none;
  width: 2px;
  height: 22px;
  margin: 0 2px 0 1px;
  background: repeating-linear-gradient(#b4b4b4 0 1px, transparent 1px 3px);
`;
const Sep = styled.span`
  flex: none;
  width: 1px;
  height: 22px;
  margin: 0 2px;
  background: #dedede;
`;
const IconButton = styled.button<{ $on?: boolean }>`
  flex: none;
  display: grid;
  place-items: center;
  width: 25px;
  height: 25px;
  ${(p) => p.$on && css`background: #c5d5d2;`}
`;
const ArrowButton = styled.button`
  flex: none;
  display: grid;
  place-items: center;
  width: 10px;
  height: 20px;
`;
const Caret = styled.span`
  border: 3px solid transparent;
  border-top-color: #111;
  border-bottom: 0;
`;
const Overflow = styled.button`
  display: flex;
  flex: none;
  flex-direction: column;
  align-items: center;
  justify-content: space-between;
  width: 9px;
  height: 18px;
  margin-left: auto;
  margin-right: 1px;
  padding-bottom: 1px;
  font-size: 11px;
  font-weight: 700;
  line-height: 6px;
`;
const TextButton = styled.button<{ $tight?: boolean }>`
  flex: none;
  padding: 0 ${(p) => (p.$tight ? 0 : 3)}px;
  line-height: 14px;
  white-space: nowrap;
`;
const StartButton = styled.button`
  display: flex;
  flex: none;
  align-items: center;
  gap: 3px;
  width: 52px;
  line-height: 14px;
  white-space: nowrap;
`;
const TileBox = styled.span<{ $fg: string; $bg: string; $bd?: string; $fs: number; $serif?: boolean }>`
  display: flex;
  flex-direction: column;
  align-items: center;
  justify-content: center;
  width: 20px;
  height: 20px;
  color: ${(p) => p.$fg};
  background: ${(p) => p.$bg};
  ${(p) => p.$bd && css`box-shadow: inset 0 0 0 1px ${p.$bd};`}
  font-size: ${(p) => p.$fs}px;
  line-height: ${(p) => (p.$fs > 10 ? 20 : 10)}px;
  font-weight: ${(p) => (p.$fs > 10 ? 700 : 500)};
  white-space: nowrap;
  ${(p) => p.$serif && css`font-family: "Liberation Serif", "Noto Sans CJK SC", serif;`}
`;
const TileLine = styled.span<{ $fg?: string; $small: boolean }>`
  ${(p) => p.$fg && css`color: ${p.$fg};`}
  ${(p) => p.$small && css`font-size: 6px;`}
`;
const StepTile = styled.span`
  display: flex;
  justify-content: center;
  width: 20px;
  height: 20px;
  background: #c9cbc9;
  font-size: 8px;
  line-height: 8px;
`;
const StepLetter = styled.span<{ $n: number }>`
  width: 5px;
  text-align: center;
  padding-top: ${(p) => p.$n * 4}px;
`;

type Item = React.ReactNode;
const I = (name: string, on = false): Item => (
  <IconButton aria-label={name} $on={on}><Icon name={name} /></IconButton>
);
const V: Item = <ArrowButton aria-label="more"><Caret /></ArrowButton>;
const S: Item = <Sep />;
const T = (text: string): Item => <TextButton>{text}</TextButton>;
const tb = (a: string, b: string, fg: string, bg: string, bd?: string, fg2?: string, fs = 9): Item => (
  <IconButton>
    <TileBox $fg={fg} $bg={bg} $bd={bd} $fs={fs}>
      <TileLine $small={/^[^A-Z]{3}$/.test(a)}>{a}</TileLine>
      {b && <TileLine $fg={fg2} $small={/^[^A-Z]{3}$/.test(b)}>{b}</TileLine>}
    </TileBox>
  </IconButton>
);
const big = (a: string, fg: string, bg: string, fs = 18, serif = false): Item => (
  <IconButton><TileBox $fg={fg} $bg={bg} $fs={fs} $serif={serif}>{a}</TileBox></IconButton>
);
const steps = (word: string): Item => (
  <IconButton>
    <StepTile>{word.split('').map((ch, i) => <StepLetter key={i} $n={i}>{ch}</StepLetter>)}</StepTile>
  </IconButton>
);
const split2 = (a: string, b: string): string => `linear-gradient(${a} 50%, ${b} 50%)`;

const Toolbar = ({ w, items, over, end }: { w?: number; items: Item[]; over?: 'v' | 'vv'; end?: boolean }) => (
  <Bar $w={w} $end={end} role="toolbar">
    <Grip />
    {items.map((it, i) => <React.Fragment key={i}>{it}</React.Fragment>)}
    {over && (
      <Overflow aria-label="toolbar options">
        <span>{over === 'vv' ? '»' : ''}</span>
        <Caret />
      </Overflow>
    )}
  </Bar>
);

const SearchBox = styled.label`
  display: flex;
  align-items: center;
  width: 102px;
  height: 16px;
  margin-left: 4px;
  padding-right: 2px;
  border: 1px solid #8a8a8a;
  background: #fff;
`;
const SearchInput = styled.input`
  flex: 1;
  min-width: 0;
  border: 0;
  padding: 0 1px;
  background: none;
  outline: 0;
  &::placeholder { color: #222; opacity: 1; }
`;

/* ---------- frame ---------- */

const Frame = styled.div`
  display: flex;
  flex-direction: column;
  height: 100vh;
  min-height: 480px;
  overflow: hidden;
  border-left: 3px solid #000;
  background: #fff;
`;
const TitleBar = styled.header`
  display: flex;
  flex: none;
  align-items: center;
  height: 21px;
  padding: 0 8px 3px 1px;
  font-size: 10px;
  white-space: pre;
`;
const Logo = styled.span`
  width: 34px;
  color: #8795a3;
  font-family: "Open Sans", sans-serif;
  font-size: 17px;
  font-weight: 700;
`;
const Brand = styled.span`
  margin-left: auto;
  color: #009090;
  font-family: "Open Sans", sans-serif;
  font-size: 11px;
  font-weight: 800;
`;
const MenuBar = styled.nav`
  display: flex;
  flex: none;
  align-items: center;
  height: 22px;
  padding: 0 0 2px 3px;
  background: #c8d6d4;
`;
const MenuItem = styled.button<{ $w: number }>`
  flex: 0 0 ${(p) => p.$w}px;
  text-align: left;
  white-space: nowrap;
  line-height: 14px;
`;
const MenuIcon = styled.span`width: 19px;`;

const MENUS: [string, string, string, number][] = [
  ['文件(', 'F', ')', 40], ['编辑(', 'E', ')', 39], ['视图(', 'V', ')', 41], ['插入(', 'S', ')', 40],
  ['格式(', 'R', ')', 40], ['工具(', 'T', ')', 40], ['装配(', 'A', ')', 41], ['产品制造信息(', 'M', ')', 80],
  ['信息(', 'I', ')', 37], ['分析(', 'L', ')', 45], ['首选项(', 'P', ')', 49], ['窗口(', 'O', ')', 42],
  ['GC工具箱', '', '', 50], ['', 'P', 'unch StdLIB', 67], ['帮助(', 'H', ')', 43], ['PressUG V5.1', '', '', 70],
];

const Main = styled.main`
  display: flex;
  flex: 1;
  min-height: 0;
`;
const Rail = styled.aside`
  display: flex;
  flex: none;
  flex-direction: column;
  align-items: center;
  width: 24px;
  background: #dcdcdc;
  overflow: hidden;
`;
const RailButton = styled.button<{ $h: number; $on?: boolean }>`
  display: grid;
  flex: none;
  place-items: center;
  width: 24px;
  height: ${(p) => p.$h}px;
  ${(p) => p.$on && css`background: #fff;`}
`;
const Panel = styled.section`
  display: flex;
  flex-direction: column;
  flex: 0 0 216px;
  padding: 0 8px 6px 5px;
`;
const PanelTitle = styled.div`
  display: flex;
  flex: none;
  align-items: center;
  justify-content: space-between;
  height: 23px;
  padding: 0 6px 0 3px;
  font-size: 10px;
`;
const Restore = styled.button`
  width: 10px;
  height: 9px;
  border: 1px solid #333;
`;
const TreeBox = styled.div`
  display: flex;
  flex: 1;
  flex-direction: column;
  min-height: 0;
  border: 1px solid #dadada;
  border-bottom: 0;
  overflow: hidden;
`;
const TreeBody = styled.div`
  display: flex;
  flex: 1;
  min-height: 0;
  overflow: hidden;
`;
const HeadRow = styled.div`
  display: flex;
  flex: none;
  align-items: center;
  height: 18px;
  padding: 0 14px 0 5px;
  background: #f0f0f0;
  border-bottom: 1px solid #dadada;
  font-size: 10px;
`;
const UpCaret = styled.span`
  margin-left: 14px;
  border: 4px solid transparent;
  border-bottom-color: #222;
  border-top: 0;
`;
const HeadLast = styled.span`
  margin-left: auto;
  padding-left: 4px;
  border-left: 1px solid #dadada;
`;
const Tree = styled.table`
  flex: 1;
  align-self: flex-start;
  border-collapse: collapse;
  table-layout: fixed;
`;
const TreeRow = styled.tr`
  height: 16px;
  &:nth-child(4n) { height: 17px; }
  &:nth-child(even) { background: #f8f8f8; }
`;
const NameCell = styled.td<{ $dim: boolean }>`
  padding: 0 0 0 24px;
  border-bottom: 1px solid #efefef;
  border-right: 1px solid #e6e6e6;
  color: ${(p) => (p.$dim ? '#a4a4a4' : '#222')};
  font-size: 10px;
  line-height: 12px;
`;
const NameLabel = styled.label`
  display: flex;
  align-items: center;
  gap: 2px;
  height: 15px;
  border-left: 1px dotted #aaa;
  &::before { content: ''; width: 5px; border-top: 1px dotted #aaa; }
`;
const Tick = styled.input`
  appearance: none;
  display: grid;
  place-items: center;
  flex: none;
  width: 11px;
  height: 11px;
  margin: 0;
  border: 1px solid #222;
  background: #fff;
  &:checked::before {
    content: '';
    width: 5px;
    height: 8px;
    margin-bottom: 2px;
    border: solid #1fa838;
    border-width: 0 2px 2px 0;
    transform: rotate(42deg);
  }
`;
const OkCell = styled.td`
  width: 27px;
  padding: 0 0 0 5px;
  border-bottom: 1px solid #efefef;
`;
const ScrollV = styled.div`
  display: flex;
  flex: 0 0 13px;
  flex-direction: column;
  align-items: center;
  background: #f4f4f4;
`;
const ScrollH = styled.div`
  display: flex;
  flex: none;
  align-items: center;
  height: 14px;
  padding-right: 15px;
  background: #f1f1f1;
`;
const ScrollButton = styled.button`
  display: grid;
  place-items: center;
  flex: none;
  width: 14px;
  height: 14px;
`;
const ThumbV = styled.div`
  width: 12px;
  height: 207px;
  margin-top: 108px;
  margin-bottom: auto;
  background: #cdcdcd;
`;
const ThumbH = styled.div`
  width: 91px;
  height: 12px;
  margin-right: auto;
  background: #cdcdcd;
`;
const Splitter = styled.div`
  flex: none;
  height: 4px;
  margin: 2px 0 0;
  background: #c9c9c9;
`;
const Fold = styled.button`
  display: flex;
  flex: none;
  align-items: center;
  justify-content: space-between;
  height: 19px;
  padding: 2px 4px 0 5px;
  border-bottom: 1px solid #c4c4c4;
  color: #3579a6;
  font-size: 11px;
  line-height: 14px;
  &:last-child { height: 20px; }
`;
const Chevron = ({ d, color = '#444', s = 8 }: { d: string; color?: string; s?: number }) => (
  <Svg width={s} height={s} viewBox="0 0 8 8"><path d={d} fill="none" stroke={color} strokeWidth="1.6" /></Svg>
);
const Check = () => (
  <Svg width="11" height="11" viewBox="0 0 11 11"><path d="M0 6l3-1 1 2q2-4 6-7l1 2q-4 4-6 9h-2z" fill="#27b043" /></Svg>
);

const BODIES: [number, boolean][] = [
  [16, false], [18, false], [20, false], [22, false], [24, false], [26, false], [28, true], [29, false],
  [31, true], [32, false], [34, true], [35, true], [36, false], [38, true], [39, false], [41, true],
  [42, false], [44, true], [45, false], [47, false], [49, false], [50, true], [51, false], [53, true],
];
const RAIL: [string, number, boolean?][] = [
  ['gear', 22], ['n1', 58], ['n2', 21], ['n3', 36, true], ['n4', 34], ['n5', 52],
  ['n6', 38], ['n7', 46], ['n8', 24], ['n9', 44], ['n10', 24], ['n11', 44],
];

/* ---------- graphics window ---------- */

const View = styled.section`
  position: relative;
  flex: 1;
  min-width: 0;
  overflow: hidden;
  border: 1px solid #e5b27c;
  border-left: 2px solid #d3ab8c;
  border-right: 0;
  background: linear-gradient(#b4b6b7, #c6c8c9 25%, #d8dadb 50%, #e4e6e7 72%, #e8eaeb);
`;
const Scene = styled.svg`
  position: absolute;
  inset: 0;
  width: 100%;
  height: 100%;
`;
const Caption = styled.div`
  position: absolute;
  top: 14px;
  left: 26px;
  display: flex;
  flex-direction: column;
  align-items: center;
  width: 640px;
  color: #3f48cc;
  font-family: "Noto Sans CJK SC", sans-serif;
  font-weight: 700;
  font-size: 64px;
  line-height: 64px;
  white-space: nowrap;
`;
const Part = styled.div`
  display: flex;
  gap: 30px;
  height: 89px;
  margin-bottom: 91px;
  padding-right: 8px;
  overflow: hidden;
  font-size: 96px;
  line-height: 68px;
`;
const CaptionLine = styled.div`
  margin-bottom: 63px;
  padding-right: 8px;
`;

const slots = [
  'M1 9L164 4', 'M1 25L30 24', 'M122 22L165 20', 'M2 40L34 39', 'M124 37L165 36',
  'M3 56L42 54', 'M122 54L166 52', 'M4 73L167 68',
];
const Plate = ({ x, y, s }: { x: number; y: number; s: number }) => (
  <g transform={`translate(${x} ${y}) scale(${s})`}>
    <path d="M0 0L163-4L167 90L4 94z" fill="#fff" stroke="#333" strokeWidth="1" />
    <path d="M4 81L167 77V90L4 94z" fill="#666" stroke="#333" strokeWidth="1" />
    {slots.map((d) => <path key={d} d={d} stroke="#444" strokeWidth="2.8" />)}
    {[0, 1, 2, 3].flatMap((r) => [0, 1, 2, 3, 4, 5].map((k) => (
      <ellipse key={`${r}${k}`} cx={48 + k * 14 + r * 0.6} cy={24 + r * 11 - k * 0.4} rx="2.8" ry="2.2" fill="#3a3a3a" />
    )))}
    <ellipse cx="61" cy="2" rx="2.5" ry="2" fill="#444" />
    <ellipse cx="103" cy="0" rx="2.5" ry="2" fill="#444" />
    {[36, 119].map((cx, i) => (
      <g key={cx}>
        <path d={`M${cx} ${31 - i * 3}v10q6 5 12 0v-10z`} fill="#8c8c8c" stroke="#333" strokeWidth="0.7" />
        <ellipse cx={cx + 6} cy={31 - i * 3} rx="6" ry="5" fill="#f0f0f0" stroke="#444" strokeWidth="0.8" />
      </g>
    ))}
    <path d="M70 82l14-.4M88 82l12-.4" stroke="#222" strokeWidth="2" />
  </g>
);
const Notes = ({ x, y }: { x: number; y: number }) => (
  <g transform={`translate(${x} ${y})`} stroke="#c98245" strokeWidth="1.2" fill="none">
    <path d="M0 1h28M0 3.5h24M0 6h36M0 8.5h20M0 11h13M0 13.5h13M0 16h10M0 18.500h11" strokeDasharray="5 1 3 1" />
  </g>
);

const Graphics = () => (
  <Scene viewBox="245 154 971 503" preserveAspectRatio="xMinYMin meet" aria-hidden="true">
    <Plate x={384} y={381} s={0.92} />
    <Plate x={593} y={375} s={0.92} />
    <Plate x={796} y={354} s={1} />
    <Notes x={452} y={351} />
    <Notes x={659} y={355} />
    <Notes x={869} y={347} />
    <path d="M462 354l4 5 4-5M466 359v6M478 354h-4q-3 5 0 8h3" stroke="#35b050" strokeWidth="1.5" fill="none" />
    <path d="M461 370v26" stroke="#1450b0" strokeWidth="3" />
    <path d="M453 394l12-4 5 8-14 4z" fill="#b9e0f4" />
    <path d="M476 396h18v3h-18z" fill="#d8202c" />
    <path d="M664 386l16-3 3 9-16 4z" fill="#2fd040" stroke="#168a24" />
    <path d="M872 376h14v13h-14zM870 377l6 4M888 377l-6 4M870 388l5-4M888 388l-6-4" fill="#b8b8b8" stroke="#333" strokeWidth="1.4" />
    <path d="M885 371h5v4h-5z" fill="#e03ce0" />
    <circle cx="601" cy="320" r="23.5" fill="#c9cc2c" />
    <circle cx="601" cy="320" r="12" fill="none" stroke="#222" strokeWidth="1" />
    <path d="M601 308v24M589 320h24" stroke="#222" strokeWidth="3" />
    <path d="M601 309v22M590 320h22" stroke="#f5f5d0" strokeWidth="1.2" />
    <path d="M287 588h15v24h-15z" fill="#dadada" stroke="#b4b4b4" />
    <path d="M287 600h15" stroke="#b4b4b4" />
    <path d="M285.5 612v-18" stroke="#0b2f9c" strokeWidth="3" />
    <path d="M282 595l3.5-6 3.5 6z" fill="#1d62d0" />
    <path d="M282 585l2.5 4 2.5-4M284.5 589v3" stroke="#2a9a70" fill="none" />
    <path d="M288 612h20" stroke="#c8283c" strokeWidth="2" />
    <path d="M306 609.5l7 2.5-7 2.5z" fill="#c8283c" />
    <path d="M316 609l5 7M321 609l-5 7" stroke="#d0404c" strokeWidth="1.2" />
    <circle cx="285" cy="613" r="3" fill="#c9c9c9" stroke="#777" strokeWidth="0.6" />
  </Scene>
);

/* ---------- bottom ---------- */

const Filter = styled.select<{ $w: number }>`
  appearance: none;
  flex: 0 0 ${(p) => p.$w}px;
  height: 17px;
  margin: 0 4px 0 2px;
  padding: 0 12px 0 1px;
  border: 1px solid #b0b0b0;
  border-radius: 0;
  background: linear-gradient(45deg, transparent 50%, #111 50%) right 7px center / 4px 4px no-repeat,
    linear-gradient(-45deg, transparent 50%, #111 50%) right 3px center / 4px 4px no-repeat #fff;
  background: linear-gradient(to top right, transparent 50%, #111 50%) right 7px center / 4px 4px no-repeat,
    linear-gradient(to top left, transparent 50%, #111 50%) right 3px center / 4px 4px no-repeat #fff;
  line-height: 14px;
`;
const SmallBar = styled.div<{ $w: number; $on?: boolean }>`
  display: flex;
  flex: 0 0 ${(p) => p.$w}px;
  align-items: center;
  height: 20px;
  ${(p) => p.$on && css`background: #c5dad6; box-shadow: inset 0 0 0 1px #a9c4bf;`}
`;
const SmallButton = styled.button`
  flex: 1;
  display: grid;
  place-items: center;
  min-width: 0;
  height: 20px;
`;
const Status = styled.footer`
  flex: none;
  height: 21px;
  border-top: 1px solid #8c8c8c;
  border-bottom: 3px solid #a6a6a6;
  font-weight: 700;
  line-height: 15px;
`;
const small = (w: number, names: string[], on = false) => (
  <SmallBar $w={w} $on={on}>
    {names.map((n) => <SmallButton key={n} aria-label={n}><Icon name={n} size={15} /></SmallButton>)}
  </SmallBar>
);

export default function App() {
  return (
    <Frame>
      <Global />
      <TitleBar>
        <Logo>NX</Logo>
        <span>(将来的你，一定会感激现在拼命的自己) - 建模 - [2020.7.23.prt （修改的） ]</span>
        <Brand>SIEMENS</Brand>
      </TitleBar>
      <MenuBar>
        <MenuIcon><Icon name="app" size={13} /></MenuIcon>
        {MENUS.map(([a, u, z, w]) => <MenuItem key={a + z} $w={w}>{a}{u && <u>{u}</u>}{z}</MenuItem>)}
      </MenuBar>

      <Row $h={28}>
        <Toolbar w={446} over="v" items={[
          <StartButton><Icon name="start" />启动<Caret /></StartButton>,
          I('file'), I('open'), I('save'), S, I('undo'), V, I('redo'), S, I('palette'), V, S,
          I('rotate'), I('windows'), S, I('info'), S,
          <SearchBox><SearchInput aria-label="查找命令" placeholder="查找命令" /><Icon name="search" size={12} /></SearchBox>,
        ]} />
        <Toolbar w={136} over="vv" items={[I('sheet'), I('sheet2'), I('sheet3'), I('xform')]} />
        <Toolbar w={67} over="vv" items={[I('surf1'), I('surf2')]} />
        <Toolbar w={143} over="v" items={[I('key'), I('trim'), I('corner'), I('curves'), I('bridge')]} />
        <Toolbar w={42} over="vv" items={[T('导出')]} />
        <Toolbar w={114} over="vv" items={[I('layers'), I('csys'), V, S, I('hand')]} />
        <Toolbar w={116} over="vv" items={[I('white'), V, I('white'), V, <TextButton $tight><u>W</u>CS</TextButton>, V]} />
        <Toolbar items={[I('line'), I('arc'), I('spline'), big('A', '#333', '#fff', 20, true), I('offset'), I('proj')]} />
      </Row>

      <Row $h={28}>
        <Toolbar w={523} over="v" items={[
          I('plane'), V, I('extrude'), I('hole'), I('pocket'), S, I('thick'), I('pattern'), I('unite'), V,
          I('trimBody'), I('split'), I('draft'), I('chamfer'), I('shell'), I('sweep'), I('scale'), I('wrap'), S,
          I('bend'), I('face'), I('block'), I('cone'),
        ]} />
        <Toolbar w={334} over="v" items={[
          I('s1'), I('s2'), I('s3'), I('s4'), I('s5'), I('s6'), V, I('s7'), V, I('s8'), V, I('s9'), I('s10'), I('s11'), V,
        ]} />
        <Toolbar items={[
          I('link', true), S, I('c1'), I('c2'), I('c3'), I('c4'), I('c5'), I('c6'), I('c7'), I('c8'), I('c9'), S,
          I('c10'), I('c11'), I('c12'), I('c13'),
        ]} />
      </Row>

      <Row $h={27}>
        <Toolbar w={167} over="v" items={[
          tb('替换', '', '#333', '#f1effa', '#b9b2e0'), tb('实透', '', '#333', '#f1effa', '#b9b2e0'),
          tb('面透', '', '#333', '#f1effa', '#b9b2e0'), tb('还原', '', '#222', '#bdb4dc', '#8f84c0'),
          tb('注解', '颜色', '#c08420', '#f4e7c0', '#d88a7c', undefined, 8), tb('材质', '颜色', '#7c3010', '#f5b820', '#d8402c', undefined, 8),
        ]} />
        <Toolbar w={195} over="v" items={[
          tb('快速', '模板', '#444', '#e9e9e9', '#bbb'), tb('快速', '夹板', '#d23c4c', '#f3eaea', '#e0b4b4'), steps('COPY'),
          tb('弹', '簧', '#222', '#fff'), tb('自动', '装配', '#e05858', '#f6dede', '#e8b4b4'), I('cubeRed'), I('cubeYel'),
        ]} />
        <Toolbar w={570} over="v" items={[
          tb('氮气', '弹簧', '#1f4a34', '#cfe3d4', '#8aa894'), tb('导柱', '', '#d84880', '#fdf0f5', '#e070a0', undefined, 8),
          tb('耐磨', '片', '#d04848', '#fbe8ee', '#e070a0'), I('trefoil'), tb('吊模', '块', '#1f6f74', '#3fb5b0', '#287c80'),
          tb('安全', '块', '#d84870', '#fff', '#e070a0', undefined, 8),
          tb('库存', 'A', '#6c8c14', split2('#a6cf2c', '#35c4e8'), undefined, '#1a7fb8'),
          tb('库存', 'B', '#6c8c14', split2('#a6cf2c', '#35c4e8'), undefined, '#1a7fb8'),
          tb('刀口', '夹板', '#7c4a10', split2('#e8c82c', '#9a90d0'), '#444', '#2c2060'),
          tb('图层', '加载', '#222', '#e3e6e8'), tb('更新', '', '#333', '#eef0ee'),
          tb('初始线', '更新位', '#3c6c14', split2('#98c83c', '#e8a4c4'), undefined, '#b0306c'),
          tb('钢链', '', '#7c6c4c', '#eeeae2'),
          T('自动夹板'), T('自动刀口板'), T('自动孔'), T('CNC刀具库'), T('CNC台面库'),
        ]} />
        <Toolbar items={[
          I('redSq'), V, tb('6#', '精铣', '#a05010', '#f8f020', undefined, '#5c3408'), V,
          tb('55', 'D2', '#c84a8c', '#8fd2ec', undefined, '#14507c', 10), V, tb('模座', 'A1', '#4a2c14', '#a88458', undefined, '#e8d0a0'), V,
          I('swirl'), V, I('swirlG'), V, big('原', '#222', '#e8eae8', 14), V, I('gears'), V,
        ]} />
      </Row>

      <Row $h={27}>
        <Toolbar w={169} over="v" items={[T('螺丝'), T('常用块'), T('等高套'), T('导向杆'), T('耐磨片')]} />
        <Toolbar w={300} over="v" items={[
          T('移参'), T('导出'), T('40BOX'), steps('COPY'), T('单开'), T('MM8'), T('MM10'), T('MM12'), T('MM16'), T('螺丝'),
        ]} />
        <Toolbar w={113} over="v" items={[
          tb('氮气', '弹簧', '#1f3428', '#d9e4dc'), V, tb('我的', '标准件', '#2a9a3c', '#eef4ee', undefined, '#333'), V,
          tb('3D', '图库', '#1f9a4c', '#e6eee6', undefined, '#e86c2c'),
        ]} />
        <Toolbar w={536} over="v" end items={[
          tb('MV', '移动', '#1f2fd8', '#dde0ea', undefined, '#222'), V, I('hook'), V, I('legs'), V,
          tb('面', '拉伸', '#1f5c4c', '#d5e2da', undefined, '#a03030'), I('plus'), V,
          big('模', '#6c641c', '#fff'), V, big('夹', '#5c5418', '#fff'), tb('刀口', '排侧', '#333', '#f3ece2', undefined, '#e8b07c'), I('pink'), V,
          tb('孔', '点动', '#126c30', '#b8d8c4', undefined, '#a02c2c'), V, big('M4', '#333', '#e9ebe9', 13, true), V,
          big('N4', '#e07c5c', '#efe9e4', 13, true), V, big('M4', '#27485c', '#8fc0d4', 13, true), V,
          tb('孔', '自动', '#1c2c8c', '#d3dce6', undefined, '#a02c2c'), tb('牙', '自动', '#d83040', '#ececec', undefined, '#222'), V,
          tb('挂', '台', '#333', '#eef0ee'), V,
        ]} />
      </Row>

      <Main>
        <Rail>
          {RAIL.map(([n, h, on]) => (
            <RailButton key={n} $h={h} $on={on} aria-label={n}><Icon name={n} size={n === 'gear' ? 13 : 20} /></RailButton>
          ))}
          <RailButton $h={10} aria-label="resize"><Icon name="n12" size={20} /></RailButton>
          <RailButton $h={12} aria-label="top"><Chevron d="M1 2h6M2 5h4" color="#aaa" s={7} /></RailButton>
          <RailButton $h={12} aria-label="up"><Chevron d="M2 5h4" color="#aaa" s={7} /></RailButton>
          <RailButton $h={12} aria-label="down"><Caret /></RailButton>
          <RailButton $h={14} aria-label="bottom"><Chevron d="M1 1h6M2 4l2 2 2-2" color="#111" /></RailButton>
        </Rail>

        <Panel>
          <PanelTitle>部件导航器<Restore aria-label="restore" /></PanelTitle>
          <TreeBox>
            <HeadRow>名称<UpCaret /><HeadLast>最新</HeadLast></HeadRow>
            <TreeBody>
              <Tree>
                <tbody>
                  {BODIES.map(([n, dim]) => (
                    <TreeRow key={n}>
                      <NameCell $dim={dim}>
                        <NameLabel>
                          <Tick type="checkbox" defaultChecked />
                          <Icon name="body" size={13} />
                          体 ({n})
                        </NameLabel>
                      </NameCell>
                      <OkCell><Check /></OkCell>
                    </TreeRow>
                  ))}
                </tbody>
              </Tree>
              <ScrollV>
                <ScrollButton aria-label="scroll up"><Chevron d="M1 6l3-4 3 4" /></ScrollButton>
                <ThumbV />
                <ScrollButton aria-label="scroll down"><Chevron d="M1 2l3 4 3-4" /></ScrollButton>
              </ScrollV>
            </TreeBody>
            <ScrollH>
              <ScrollButton aria-label="scroll left"><Chevron d="M6 1L2 4l4 3" /></ScrollButton>
              <ThumbH />
              <ScrollButton aria-label="scroll right"><Chevron d="M2 1l4 3-4 3" /></ScrollButton>
            </ScrollH>
          </TreeBox>
          <Splitter />
          {['相依性', '细节', '预览'].map((t) => (
            <Fold key={t}>{t}<Chevron d="M1 1l3 5 3-5" color="#3579a6" s={10} /></Fold>
          ))}
        </Panel>

        <View>
          <Graphics />
          <Caption>
            <Part><span>(</span><span>一</span><span>)</span></Part>
            <CaptionLine>汽车立柱外板与尾板</CaptionLine>
            <div>连接板成型模结构设计</div>
          </Caption>
        </View>
      </Main>

      <Row $h={27}>
        <Toolbar w={437} over="v" end items={[
          I('b1'), V, I('b2'), I('b3'), I('b4'), V, I('b5'), I('b6'), I('b7'), S, I('b8'), I('b9'), I('b10'), S,
          I('b11'), S, I('b12'), I('b13'), I('b14'), S, I('b15'), V,
        ]} />
      </Row>
      <Row $h={27}>
        <Toolbar w={887} over="v" items={[
          I('d1'), I('d2'), I('d3'), I('d4'), tb('ARC', '', '#222', '#c9cbc9'), I('d6'), S,
          I('d7'), I('d8'), I('d9'), I('d8'), I('d10'), I('d11'), I('d12'), I('d13'), I('d10'), I('d14'), I('d12'), I('d15'), S,
          I('d16'), I('d17'), I('d18'), S, steps('COPY'), steps('MOVE'), I('d19'), I('d20'), I('d21'), S,
          I('d22'), I('d23'), I('d24'), I('d25'), I('d26'), I('d27'), tb('画点', '', '#222', '#fff'), tb('外形', '线', '#777', '#eee', '#999', undefined, 8),
        ]} />
      </Row>
      <Row $h={26}>
        <Filter $w={107} aria-label="选择过滤器"><option>无选择过滤器</option></Filter>
        <Filter $w={113} aria-label="选择范围"><option>整个装配</option></Filter>
        <Bar>
          {small(20, ['e0'])}{S}{small(36, ['e1', 'e2'])}{V}{small(36, ['e3', 'e4'])}{S}{small(18, ['e5'])}{V}
          <Sep />
          {small(36, ['e6', 'e7'], true)}{small(18, ['e8'])}{S}
          {small(56, ['e9', 'e10', 'e11'], true)}{small(18, ['e12'])}{small(19, ['e13'], true)}{small(18, ['e14'])}
          {small(19, ['e15'], true)}{small(18, ['e16'])}{small(37, ['e17', 'e18'], true)}{small(18, ['e19'])}{S}
          {small(18, ['e20'])}{S}
          {T('导入:部件')}{T('STEP')}<TextButton>I<u>G</u>ES</TextButton>{S}
          {T('导出:部件')}{T('STEP203')}{T('IGES')}
        </Bar>
      </Row>
      <Status>选择对象并使用 MB3，或者双击某一对象</Status>
    </Frame>
  );
}
